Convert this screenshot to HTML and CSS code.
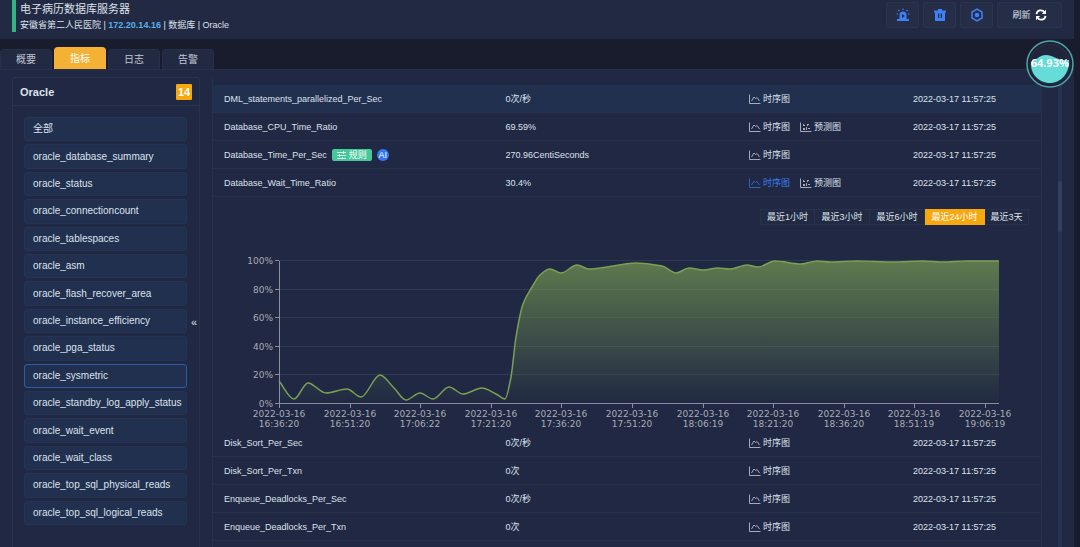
FILE: index.html
```html
<!DOCTYPE html>
<html lang="zh-CN">
<head>
  <meta charset="UTF-8">
  <meta name="viewport" content="width=device-width, initial-scale=1">
  <title>电子病历数据库服务器</title>
  <link rel="stylesheet" href="styles.css">
</head>
<body>

  <!-- shared icons -->
  <svg class="sprite" aria-hidden="true">
    <symbol id="icon-line" viewBox="0 0 12 10">
      <path d="M.5 .5V9.5H11.5M2.5 7L5 3L6.5 4.5L8 3.5L10.5 7" fill="none" stroke="currentColor"/>
    </symbol>
    <symbol id="icon-predict" viewBox="0 0 12 10">
      <path d="M.5 .5V9.5H11.5" fill="none" stroke="currentColor"/>
      <path d="M3 2h1v1h1v1h-2zM7 2h2v1h-1v1h-1zM3 6h2v2h-2zM6 5h1v3h-1zM8 6h2v1h-2z" fill="currentColor"/>
    </symbol>
  </svg>

  <div class="shell">
    <header class="topbar">
      <div class="server">
        <h1>电子病历数据库服务器</h1>
        <p>安徽省第二人民医院 | <b>172.20.14.16</b> | 数据库 | Oracle</p>
      </div>
      <div class="actions">
        <button type="button" aria-label="告警">
          <svg width="14" height="14" viewBox="0 0 14 14" fill="#3c82f6">
            <path fill-rule="evenodd" d="M3.5 11V7a3.5 3.5 0 0 1 7 0v4zM6 6v4l3-2z"/>
            <path d="M1 11h12v2H1zM6.4 .5h1.2v1.6H6.4zM2.6 1.6l1.3 1.2-.8.8L1.9 2.4zM11.4 1.6l-1.3 1.2.8.8 1.2-1.2zM.5 5.4h1.6v1H.5zM11.9 5.4h1.6v1h-1.6z"/>
          </svg>
        </button>
        <button type="button" aria-label="删除">
          <svg width="14" height="14" viewBox="0 0 14 14" fill="#3c82f6">
            <path fill-rule="evenodd" d="M5 1h4v1.5h4V4.5h-1V13H2V4.5H1V2.5h4zM5 5.500v4.500h1.300V5.500zM7.700 5.500v4.500H9V5.500z"/>
          </svg>
        </button>
        <button type="button" aria-label="设置">
          <svg width="14" height="14" viewBox="0 0 14 14" fill="none" stroke="#3c82f6" stroke-width="1.5">
            <path d="M7 1.200L12 4v6L7 12.800L2 10V4z"/>
            <circle cx="7" cy="7" r="1.5" fill="#3c82f6"/>
          </svg>
        </button>
        <button type="button" class="refresh">刷新
          <svg width="12" height="12" viewBox="0 0 12 12" fill="none" stroke="#fff" stroke-width="1.8">
            <path d="M1.500 5.200A4.300 4.300 0 0 1 9.400 3.300M10.500 6.800A4.300 4.300 0 0 1 2.600 8.700"/>
            <path d="M11 .8v4.200H6.800zM1 11.200V7h4.200z" fill="#fff" stroke="none"/>
          </svg>
        </button>
      </div>
    </header>

    <nav class="tabs">
      <button type="button">概要</button>
      <button type="button" class="active">指标</button>
      <button type="button">日志</button>
      <button type="button">告警</button>
    </nav>

    <main class="content">
      <aside class="sidebar">
        <div class="sidebar-head">
          <h2>Oracle</h2>
          <span class="count">14</span>
        </div>
        <div class="metric-list">
          <button type="button">全部</button>
          <button type="button">oracle_database_summary</button>
          <button type="button">oracle_status</button>
          <button type="button">oracle_connectioncount</button>
          <button type="button">oracle_tablespaces</button>
          <button type="button">oracle_asm</button>
          <button type="button">oracle_flash_recover_area</button>
          <button type="button">oracle_instance_efficiency</button>
          <button type="button">oracle_pga_status</button>
          <button type="button" class="active">oracle_sysmetric</button>
          <button type="button">oracle_standby_log_apply_status</button>
          <button type="button">oracle_wait_event</button>
          <button type="button">oracle_wait_class</button>
          <button type="button">oracle_top_sql_physical_reads</button>
          <button type="button">oracle_top_sql_logical_reads</button>
        </div>
        <button type="button" class="collapse" aria-label="收起">«</button>
      </aside>

      <section class="detail">
        <table>
          <colgroup>
            <col class="col-name"><col><col class="col-chart"><col class="col-time">
          </colgroup>
          <tbody>
            <tr class="highlight">
              <td>DML_statements_parallelized_Per_Sec</td>
              <td>0次/秒</td>
              <td><a href="#"><svg><use href="#icon-line"/></svg>时序图</a></td>
              <td>2022-03-17 11:57:25</td>
            </tr>
            <tr>
              <td>Database_CPU_Time_Ratio</td>
              <td>69.59%</td>
              <td><a href="#"><svg><use href="#icon-line"/></svg>时序图</a><a href="#"><svg><use href="#icon-predict"/></svg>预测图</a></td>
              <td>2022-03-17 11:57:25</td>
            </tr>
            <tr>
              <td>
                <div class="name">Database_Time_Per_Sec
                  <span class="rule"><svg width="9" height="8" viewBox="0 0 9 8" fill="none" stroke="currentColor" stroke-opacity=".8"><path d="M0 1.500h9M0 4.500h9M0 7.500h9M6.500 0v3M2.500 3v3M5.500 6v2"/></svg>规则</span>
                  <span class="ai">AI</span>
                </div>
              </td>
              <td>270.96CentiSeconds</td>
              <td><a href="#"><svg><use href="#icon-line"/></svg>时序图</a></td>
              <td>2022-03-17 11:57:25</td>
            </tr>
            <tr>
              <td>Database_Wait_Time_Ratio</td>
              <td>30.4%</td>
              <td><a href="#" class="active"><svg><use href="#icon-line"/></svg>时序图</a><a href="#"><svg><use href="#icon-predict"/></svg>预测图</a></td>
              <td>2022-03-17 11:57:25</td>
            </tr>
            <tr class="chart-row">
              <td colspan="4">
                <div class="ranges">
                  <button type="button">最近1小时</button>
                  <button type="button">最近3小时</button>
                  <button type="button">最近6小时</button>
                  <button type="button" class="active">最近24小时</button>
                  <button type="button">最近3天</button>
                </div>
                <svg id="chart" class="chart" viewBox="0 0 828 204" role="img" aria-label="Database_Wait_Time_Ratio">
                  <defs>
                    <linearGradient id="area" x1="0" y1="0" x2="0" y2="1">
                      <stop offset="0" stop-color="#7ba053" stop-opacity=".68"/>
                      <stop offset="1" stop-color="#7ba053" stop-opacity="0"/>
                    </linearGradient>
                  </defs>
                  <g id="plot" transform="translate(66 36)"></g>
                </svg>
              </td>
            </tr>
            <tr>
              <td>Disk_Sort_Per_Sec</td>
              <td>0次/秒</td>
              <td><a href="#"><svg><use href="#icon-line"/></svg>时序图</a></td>
              <td>2022-03-17 11:57:25</td>
            </tr>
            <tr>
              <td>Disk_Sort_Per_Txn</td>
              <td>0次</td>
              <td><a href="#"><svg><use href="#icon-line"/></svg>时序图</a></td>
              <td>2022-03-17 11:57:25</td>
            </tr>
            <tr>
              <td>Enqueue_Deadlocks_Per_Sec</td>
              <td>0次/秒</td>
              <td><a href="#"><svg><use href="#icon-line"/></svg>时序图</a></td>
              <td>2022-03-17 11:57:25</td>
            </tr>
            <tr>
              <td>Enqueue_Deadlocks_Per_Txn</td>
              <td>0次</td>
              <td><a href="#"><svg><use href="#icon-line"/></svg>时序图</a></td>
              <td>2022-03-17 11:57:25</td>
            </tr>
          </tbody>
        </table>
      </section>
      <div class="scroll"><div class="thumb"></div></div>
    </main>
  </div>

  <!-- floating usage ball -->
  <div class="ball">
    <svg viewBox="0 0 48 48" aria-hidden="true">
      <circle cx="24" cy="24" r="23" fill="#1c2136" stroke="#4fa5aa" stroke-width="1.5"/>
      <circle cx="24" cy="24" r="20" fill="#20253b" stroke="#293047"/>
      <path d="M5 22C9 21 13 15 20 15C27 15 31 21 43 20C44 33 35 43 24 43C13 43 4 34 5 22z" fill="#66dcd9"/>
    </svg>
    <span>64.93%</span>
  </div>

  <script src="chart.js"></script>
</body>
</html>
```
FILE: styles.css
```css
* {
  box-sizing: border-box;
}

body {
  margin: 0;
  background: #181c2d;
  color: #dde2ec;
  font-family: "Liberation Sans", "Noto Sans CJK SC", sans-serif;
  font-size: 9px;
  line-height: 12px;
}

h1, h2, p {
  margin: 0;
}

button {
  margin: 0;
  padding: 0;
  border: 1px solid #2b344e;
  background: #222942;
  color: inherit;
  font: inherit;
  cursor: pointer;
}

a {
  color: inherit;
  text-decoration: none;
}

.sprite {
  position: absolute;
  width: 0;
  height: 0;
}

.shell {
  display: flex;
  flex-direction: column;
  height: 100vh;
  margin-right: 6px;
  overflow: hidden;
}

/* header */
.topbar {
  display: flex;
  flex: none;
  justify-content: space-between;
  align-items: flex-start;
  height: 39px;
  padding: 0 12px;
  background: #222942;
}

.server {
  height: 32px;
  padding-left: 4px;
  border-left: 4px solid #35b383;
}

.server h1 {
  padding-top: 1px;
  font-size: 11px;
  font-weight: normal;
  line-height: 17px;
}

.server p {
  line-height: 15px;
}

.server b {
  color: #58b0e8;
}

.actions {
  display: flex;
  gap: 4px;
  padding-top: 2px;
}

.actions button {
  display: flex;
  align-items: center;
  justify-content: center;
  gap: 4px;
  width: 33px;
  height: 26px;
  background: #262d46;
  border-radius: 2px;
}

.actions .refresh {
  width: 65px;
}

/* tabs */
.tabs {
  display: flex;
  flex: none;
  align-items: flex-end;
  gap: 2px;
  height: 30px;
}

.tabs button {
  width: 52px;
  height: 20px;
  border-color: #272f49;
  border-bottom: 0;
  border-radius: 4px 4px 0 0;
  color: #c3c7d1;
  font-size: 10px;
}

.tabs .active {
  height: 22px;
  border-color: #f5b133;
  background: #f5b133;
  color: #fff;
}

.content {
  display: flex;
  flex: 1;
  min-height: 0;
  padding: 0 12px;
  border-top: 1px solid #28314b;
  background: #202843;
}

/* sidebar */
.sidebar {
  position: relative;
  display: flex;
  flex: none;
  flex-direction: column;
  width: 188px;
  margin-top: 7px;
  border: 1px solid #2a324c;
  border-bottom: 0;
  border-radius: 3px 3px 0 0;
}

.sidebar-head {
  display: flex;
  align-items: center;
  justify-content: space-between;
  height: 28px;
  padding: 0 7px;
  border-bottom: 1px solid #2a324c;
}

.sidebar-head h2 {
  font-size: 11px;
}

.count {
  width: 16px;
  border-radius: 1px;
  background: #f7a80f;
  color: #fff;
  font-size: 11px;
  font-weight: bold;
  line-height: 16px;
  text-align: center;
}

.metric-list {
  display: grid;
  flex: 1;
  grid-auto-rows: minmax(24px, 1fr);
  gap: 3px;
  padding: 11px 12px 22px 11px;
}

.metric-list button {
  padding-left: 8px;
  border-color: #263453;
  border-radius: 3px;
  background: #21304f;
  font-size: 10px;
  text-align: left;
  white-space: nowrap;
}

.metric-list .active {
  border-color: #2e5ba8;
}

.collapse {
  position: absolute;
  top: 238px;
  right: 2px;
  border: 0;
  background: none;
  font-size: 11px;
}

/* metric table */
.detail {
  flex: 1;
  margin: 7px 16px 0 12px;
  padding-top: 8px;
  border: 1px solid #28304a;
  border-width: 0 1px;
  overflow: hidden;
}

table {
  width: 100%;
  border-spacing: 0;
  table-layout: fixed;
}

.col-name {
  width: 34%;
}

.col-chart {
  width: 164px;
}

.col-time {
  width: 139px;
}

td {
  height: 28px;
  padding: 0 0 0 11px;
  border-bottom: 1px solid #28314b;
  white-space: nowrap;
}

.highlight td {
  background: #21304f;
}

.name {
  display: flex;
  align-items: center;
  gap: 5px;
}

.rule {
  display: flex;
  align-items: center;
  gap: 3px;
  padding: 0 5px;
  border-radius: 2px;
  background: #45c99a;
  color: #fff;
}

.ai {
  width: 12px;
  border-radius: 50%;
  background: #3478f0;
  color: #fff;
  text-align: center;
}

td a {
  display: inline-flex;
  align-items: center;
  gap: 2px;
  margin-right: 10px;
  vertical-align: middle;
}

td a svg {
  width: 12px;
  height: 10px;
  opacity: .7;
}

td a.active {
  color: #3a7df0;
}

.chart-row td {
  padding: 12px 0 0;
  border: 0;
  vertical-align: top;
}

.ranges {
  display: flex;
  justify-content: flex-end;
  padding-right: 12px;
}

.ranges button {
  width: 55px;
  height: 16px;
  border-color: #28314b;
  border-left: 0;
  line-height: 14px;
}

.ranges button:first-child {
  border-left: 1px solid #28314b;
}

.ranges .active {
  width: 60px;
  border-color: #f7a80f;
  background: #f7a80f;
  color: #fff;
}

.ranges button:last-child {
  width: 44px;
}

.chart {
  display: block;
  width: 100%;
}

.chart text {
  fill: #a9acb5;
  font-family: "DejaVu Sans", sans-serif;
  font-size: 9px;
}

.chart .grid {
  stroke: #fff;
  stroke-opacity: .08;
}

.chart .axis {
  stroke: #8b90a0;
}

.chart .line {
  fill: none;
  stroke: #7ba053;
  stroke-width: 1.5;
}

.scroll {
  width: 4px;
  background: #263250;
}

.thumb {
  height: 51px;
  margin-top: 111px;
  border-radius: 2px;
  background: #32415f;
}

.ball {
  position: fixed;
  top: 40px;
  right: 6px;
  width: 48px;
  height: 48px;
}

.ball span {
  position: absolute;
  top: 15px;
  left: 50%;
  transform: translateX(-50%);
  color: #fff;
  font: bold 11px/16px "Open Sans", sans-serif;
}
```
FILE: chart.js
```js
const W = 720;
const H = 143;
const plot = document.getElementById('plot');

// [x, y] in plot units, y counted down from 100%
const points = [
  [0, 120], [15, 138], [29, 122], [47, 132], [68, 128], [82, 136], [101, 114],
  [115, 127], [127, 139], [141, 132], [154, 138], [170, 126], [184, 133],
  [203, 127], [217, 133], [226, 138], [232, 116], [237, 76], [244, 43],
  [253, 26], [261, 14], [271, 8], [282, 12], [298, 4], [310, 8], [334, 5],
  [356, 2], [383, 5], [397, 12], [410, 7], [424, 9], [439, 7], [451, 8],
  [468, 4], [479, 6], [496, 0], [522, 3], [538, 0], [551, 1], [578, 0],
  [614, 1], [644, 0], [664, 1], [688, 0], [720, 0]
];

const times = ['16:36:20', '16:51:20', '17:06:22', '17:21:20', '17:36:20', '17:51:20',
  '18:06:19', '18:21:20', '18:36:20', '18:51:19', '19:06:19'];

// monotone cubic, so peaks and valleys stay on their points
function smooth(p) {
  const slope = i => (p[i + 1][1] - p[i][1]) / (p[i + 1][0] - p[i][0]);
  const m = p.map((_, i) => {
    if (i === 0) return slope(0);
    if (i === p.length - 1) return slope(i - 1);
    const a = slope(i - 1), b = slope(i);
    return a * b <= 0 ? 0 : 2 * a * b / (a + b);
  });
  let d = `M${p[0]}`;
  for (let i = 0; i < p.length - 1; i++) {
    const h = (p[i + 1][0] - p[i][0]) / 3;
    d += `C${p[i][0] + h},${p[i][1] + m[i] * h} ${p[i + 1][0] - h},${p[i + 1][1] - m[i + 1] * h} ${p[i + 1]}`;
  }
  return d;
}

let out = '';
for (let i = 0; i <= 5; i++) {
  const y = Math.round(H * i / 5) - 0.5;
  if (i < 5) out += `<path class="grid" d="M0 ${y}H${W}"/>`;
  out += `<path class="axis" d="M-4 ${y}H0"/>`;
  out += `<text x="-6" y="${y + 3}" text-anchor="end">${100 - i * 20}%</text>`;
}

const line = smooth(points);
out += `<path fill="url(#area)" d="${line}V${H}H0Z"/><path class="line" d="${line}"/>`;
out += `<path class="axis" d="M.5 0V${H}M0 ${H - 0.5}H${W}"/>`;

times.forEach((t, i) => {
  const x = Math.round(i * 70.6);
  out += `<path class="axis" d="M${x + 0.5} ${H}v4"/>`;
  out += `<text y="156" text-anchor="middle"><tspan x="${x}">2022-03-16</tspan><tspan x="${x}" dy="10">${t}</tspan></text>`;
});
plot.innerHTML = out;
```
